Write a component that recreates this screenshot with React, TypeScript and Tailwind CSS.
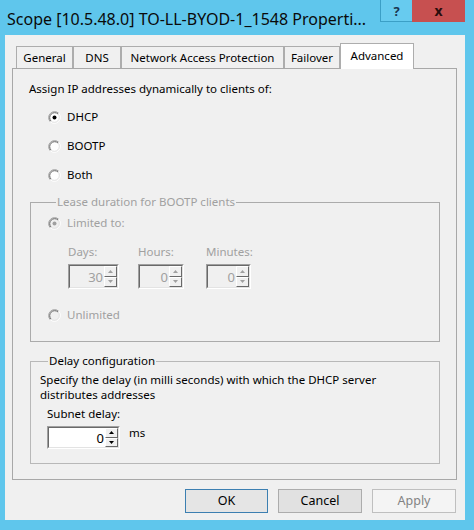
import React from "react";

const font = "font-['Segoe_UI','Noto_Sans',sans-serif]";

const Radio: React.FC<{ checked?: boolean; disabled?: boolean }> = ({ checked, disabled }) => (
  <svg width="13" height="13" viewBox="0 0 13 13" className="shrink-0">
    <circle cx="6.5" cy="6.5" r="5" fill={disabled ? "#f0f0f0" : "#ffffff"} />
    <path d="M2.26 10.74 A6 6 0 0 1 10.74 2.26" fill="none" stroke="#a0a0a0" strokeWidth="1" />
    <path d="M10.74 2.26 A6 6 0 0 1 2.26 10.74" fill="none" stroke="#ffffff" strokeWidth="1" />
    <path d="M2.97 10.03 A5 5 0 0 1 10.03 2.97" fill="none" stroke="#696969" strokeWidth="1" />
    <path d="M10.03 2.97 A5 5 0 0 1 2.97 10.03" fill="none" stroke="#e3e3e3" strokeWidth="1" />
    {checked && <circle cx="6.5" cy="6.5" r="2" fill={disabled ? "#a0a0a0" : "#000000"} />}
  </svg>
);

const RadioRow: React.FC<{ label: string; checked?: boolean; disabled?: boolean }> = ({
  label,
  checked,
  disabled,
}) => (
  <div className="flex h-[20px] items-center">
    <Radio checked={checked} disabled={disabled} />
    <span className={`ml-[6px] ${disabled ? "text-[#a0a0a0]" : "text-black"}`}>{label}</span>
  </div>
);

const Arrow: React.FC<{ up?: boolean; color: string }> = ({ up, color }) => (
  <svg width="5" height="3" viewBox="0 0 5 3">
    <path d={up ? "M0 3 L2.5 0 L5 3 Z" : "M0 0 L2.5 3 L5 0 Z"} fill={color} />
  </svg>
);

const Spin: React.FC<{ value: string; w: string; h: string; disabled?: boolean }> = ({
  value,
  w,
  h,
  disabled,
}) => (
  <div className={`${w} ${h} flex border border-t-[#a0a0a0] border-l-[#a0a0a0] border-b-white border-r-white`}>
    <div className="flex flex-1 border border-t-[#696969] border-l-[#696969] border-b-[#e3e3e3] border-r-[#e3e3e3]">
      <div
        className={`flex flex-1 items-center justify-end pr-[1px] text-[13px] ${
          disabled ? "bg-[#f0f0f0] text-[#a0a0a0]" : "bg-white text-black"
        }`}
      >
        {value}
      </div>
      <div className="flex w-[13px] flex-col">
        <div className="flex flex-1 items-center justify-center border border-t-white border-l-white border-b-[#696969] border-r-[#696969] bg-[#f0f0f0]">
          <Arrow up color={disabled ? "#a0a0a0" : "#000"} />
        </div>
        <div className="flex flex-1 items-center justify-center border border-t-white border-l-white border-b-[#696969] border-r-[#696969] bg-[#f0f0f0]">
          <Arrow color={disabled ? "#a0a0a0" : "#000"} />
        </div>
      </div>
    </div>
  </div>
);

const Tab: React.FC<{ label: string; w: string; active?: boolean }> = ({ label, w, active }) =>
  active ? (
    <div
      className={`${w} relative z-10 -mb-[1px] flex h-[26px] items-start justify-center whitespace-nowrap border border-b-0 border-[#adadad] bg-white pt-[4px]`}
    >
      {label}
    </div>
  ) : (
    <div
      className={`${w} flex h-[22px] items-center justify-center whitespace-nowrap border border-b-0 border-[#adadad] bg-[#f0f0f0]`}
    >
      {label}
    </div>
  );

export default function App() {
  return (
    <div className={`${font} flex h-[530px] w-[474px] flex-col bg-[#5fc6ec] pl-[5px] pr-[9px] pb-[10px] text-[11.5px] leading-[16px]`}>
      <div className="flex h-[35px] items-start justify-between">
        <div className="whitespace-nowrap pl-[2px] pt-[9px] text-[16px] leading-[20px] text-[#0a0a0a]">
          Scope [10.5.48.0] TO-LL-BYOD-1_1548 Properti...
        </div>
        <div className="flex">
          <div className="flex h-[22px] w-[32px] items-center justify-center border-b border-l border-[#3b9fc6] bg-[#67cbef] text-[13px] font-bold text-[#1a3550]">
            ?
          </div>
          <div className="flex h-[22px] w-[53px] items-center justify-center bg-[#c75050] text-[14px] font-bold text-[#2a0d0d]">
            x
          </div>
        </div>
      </div>

      <div className="flex flex-1 flex-col bg-[#f0f0f0] text-black">
        <div className="mt-[8px] flex items-end pl-[9px] pr-[8px]">
          <div className="flex items-end pl-[2px]">
            <Tab label="General" w="w-[57px]" />
            <Tab label="DNS" w="w-[48px]" />
            <Tab label="Network Access Protection" w="w-[163px]" />
            <Tab label="Failover" w="w-[56px]" />
            <Tab label="Advanced" w="w-[74px]" active />
          </div>
        </div>

        <div className="ml-[7px] mr-[8px] flex h-[412px] flex-col border border-[#a8a8a8] bg-[#f0f0f0] pl-[16px]">
          <div className="mt-[12px]">Assign IP addresses dynamically to clients of:</div>
          <div className="ml-[19px] mt-[10px] flex flex-col gap-[9px]">
            <RadioRow label="DHCP" checked />
            <RadioRow label="BOOTP" />
            <RadioRow label="Both" />
          </div>

          <fieldset className="ml-[1px] mt-[9px] w-[410px] border border-[#ababab] pb-[16px] pl-[17px]">
            <legend className="ml-[8px] px-[1px] text-[#a0a0a0]">Lease duration for BOOTP clients</legend>
            <div className="mt-[3px]">
              <RadioRow label="Limited to:" checked disabled />
            </div>
            <div className="ml-[20px] mt-[11px] flex text-[#a0a0a0]">
              <div className="flex w-[70px] flex-col">
                <span>Days:</span>
                <div className="mt-[4px]">
                  <Spin value="30" w="w-[51px]" h="h-[25px]" disabled />
                </div>
              </div>
              <div className="flex w-[68px] flex-col">
                <span>Hours:</span>
                <div className="mt-[4px]">
                  <Spin value="0" w="w-[46px]" h="h-[25px]" disabled />
                </div>
              </div>
              <div className="flex flex-col">
                <span>Minutes:</span>
                <div className="mt-[4px]">
                  <Spin value="0" w="w-[45px]" h="h-[25px]" disabled />
                </div>
              </div>
            </div>
            <div className="mt-[16px]">
              <RadioRow label="Unlimited" disabled />
            </div>
          </fieldset>

          <fieldset className="ml-[1px] mt-[11px] w-[410px] border border-[#b8b8b8] pb-[14px] pl-[9px]">
            <legend className="ml-[8px] px-[1px]">Delay configuration</legend>
            <div className="mt-[3px] leading-[15px]">
              Specify the delay (in milli seconds) with which the DHCP server
              <br />
              distributes addresses
            </div>
            <div className="ml-[7px] mt-[4px]">Subnet delay:</div>
            <div className="ml-[7px] mt-[4px] flex items-start">
              <Spin value="0" w="w-[73px]" h="h-[23px]" />
              <span className="ml-[9px] mt-[-1px]">ms</span>
            </div>
          </fieldset>
        </div>

        <div className="mt-[9px] flex justify-end gap-[10px] pr-[9px] text-[12.5px]">
          <button className="h-[24px] w-[83px] border border-[#3c7fb1] bg-[#e5e5e5] text-black">OK</button>
          <button className="h-[24px] w-[84px] border border-[#acacac] bg-[#e1e1e1] text-black">Cancel</button>
          <button className="h-[24px] w-[84px] border border-[#bfbfbf] bg-[#f4f4f4] text-[#838383]">Apply</button>
        </div>
      </div>
    </div>
  );
}
